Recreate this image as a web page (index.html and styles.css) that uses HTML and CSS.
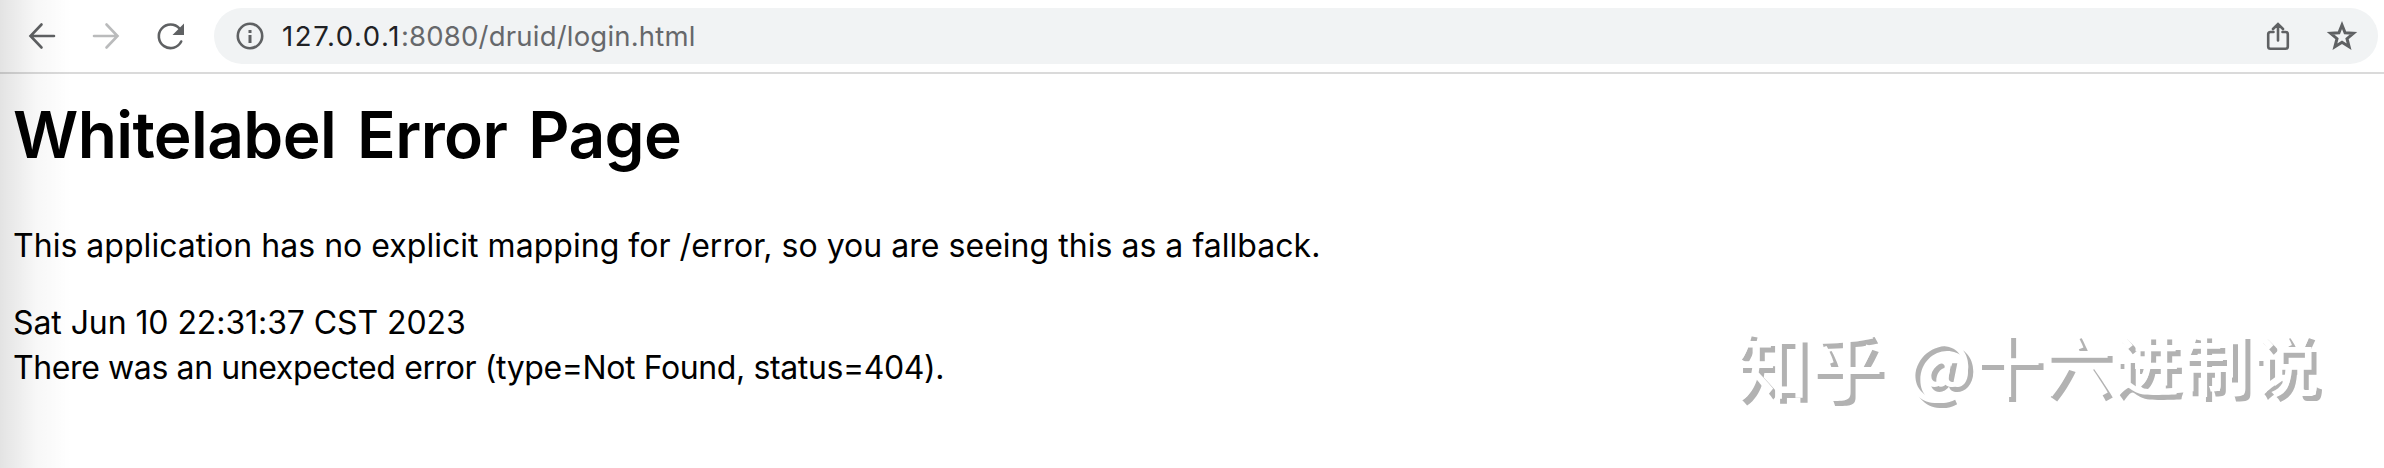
FILE: index.html
```html
<!DOCTYPE html>
<html lang="en">
<head>
    <meta charset="UTF-8">
    <title>Whitelabel Error Page</title>
    <link rel="stylesheet" href="styles.css">
</head>
<body>
    <header class="toolbar">
        <nav class="nav-buttons">
            <svg class="icon" viewBox="0 0 32 32"><path d="M28 16H5M15.500 4.500L4.500 16L15.500 27.500"/></svg>
            <svg class="icon disabled" viewBox="0 0 32 32"><path d="M4 16H27M16.500 4.500L27.500 16L16.500 27.500"/></svg>
            <svg class="icon" viewBox="0 0 32 32">
                <path class="round" d="M27.200 21.500A11.800 11.800 0 1 1 25.500 8.500"/>
                <path class="fill" d="M30 3.500V15H18.500Z"/>
            </svg>
        </nav>
        <div class="address-bar">
            <svg class="icon info" viewBox="0 0 32 32">
                <circle cx="16" cy="16" r="12.200"/>
                <path class="fill" d="M14.500 10h3v3h-3zM14.500 15h3v8h-3z"/>
            </svg>
            <div class="url"><span class="host">127.0.0.1</span><span class="path">:8080/druid/login.html</span></div>
            <svg class="icon share" viewBox="0 0 32 32"><path d="M11.500 12H8.500Q6.200 12 6.200 14.200V26.500Q6.200 28.700 8.500 28.700H23.500Q25.800 28.700 25.800 26.500V14.200Q25.800 12 23.500 12H20.500M16 20.500V4.500M11 9L16 4L21 9"/></svg>
            <svg class="icon star" viewBox="0 0 32 32"><path d="M16 5L19.100 12.800L27.400 13.300L21 18.700L23.100 26.800L16 22.300L8.900 26.800L11 18.700L4.600 13.300L12.900 12.800Z"/></svg>
        </div>
    </header>
    <main class="content">
        <h1>Whitelabel Error Page</h1>
        <p class="message">This application has no explicit mapping for /error, so you are seeing this as a fallback.</p>
        <div class="date">Sat Jun 10 22:31:37 CST 2023</div>
        <div class="error">There was an unexpected error (type=Not Found, status=404).</div>
    </main>
    <div class="edge-shadow"></div>
    <div class="watermark" lang="zh-CN"><span class="site">知乎</span><span class="author">@十六进制说</span></div>
</body>
</html>
```

FILE: styles.css
```css
body {
    margin: 0;
    height: 468px;
    position: relative;
    overflow: hidden;
    background-color: #fff;
    color: #000;
    font-family: Inter, "Liberation Sans", sans-serif;
}
.toolbar {
    display: flex;
    align-items: center;
    box-sizing: border-box;
    height: 74px;
    padding: 0 6px 0 26px;
    border-bottom: 2px solid #dadada;
}
.nav-buttons {
    display: flex;
    gap: 32px;
    width: 188px;
}
.icon {
    width: 32px;
    height: 32px;
    flex: none;
    fill: none;
    stroke: #5f6163;
    stroke-width: 2.6;
    stroke-linecap: round;
}
.icon .fill {
    fill: #5f6163;
    stroke: none;
}
.disabled {
    stroke: #babbbc;
}
.address-bar {
    flex: 1;
    display: flex;
    align-items: center;
    box-sizing: border-box;
    height: 56px;
    padding: 0 20px;
    border-radius: 28px;
    background-color: #f1f3f4;
}
.url {
    flex: 1;
    margin-left: 16px;
    font-size: 27.5px;
    line-height: 56px;
    white-space: nowrap;
}
.host {
    color: #202124;
    letter-spacing: 1.6px;
}
.path {
    color: #66686b;
    letter-spacing: 0.2px;
}
.star {
    margin-left: 32px;
    stroke-width: 3;
    stroke-linecap: butt;
}
.content {
    padding: 22px 13px 0;
    font-size: 32px;
    line-height: 45px;
    white-space: nowrap;
}
h1 {
    margin: 0;
    font-size: 64px;
    font-weight: 600;
    line-height: 78px;
    letter-spacing: -0.6px;
    word-spacing: 5.5px;
}
.message {
    margin: 49px 0 32px;
    letter-spacing: 0.03px;
}
.date {
    letter-spacing: -0.08px;
}
.error {
    letter-spacing: -0.39px;
}
.edge-shadow {
    position: absolute;
    top: 0;
    left: 0;
    width: 72px;
    height: 468px;
    background: linear-gradient(to right, rgba(0, 0, 0, 0.11), rgba(0, 0, 0, 0.03) 50%, transparent);
}
/* white lettering, only its shadow shows on the page */
.watermark {
    position: absolute;
    left: 1735px;
    top: 314px;
    display: flex;
    gap: 23px;
    color: #fff;
    font-family: "Noto Sans CJK SC", sans-serif;
    font-size: 68px;
    font-weight: 500;
    line-height: 96px;
    text-shadow: 5px 5px 0 #b2b2b2;
    white-space: nowrap;
}
.site {
    font-size: 74px;
}
.author {
    letter-spacing: 1.5px;
}
```
